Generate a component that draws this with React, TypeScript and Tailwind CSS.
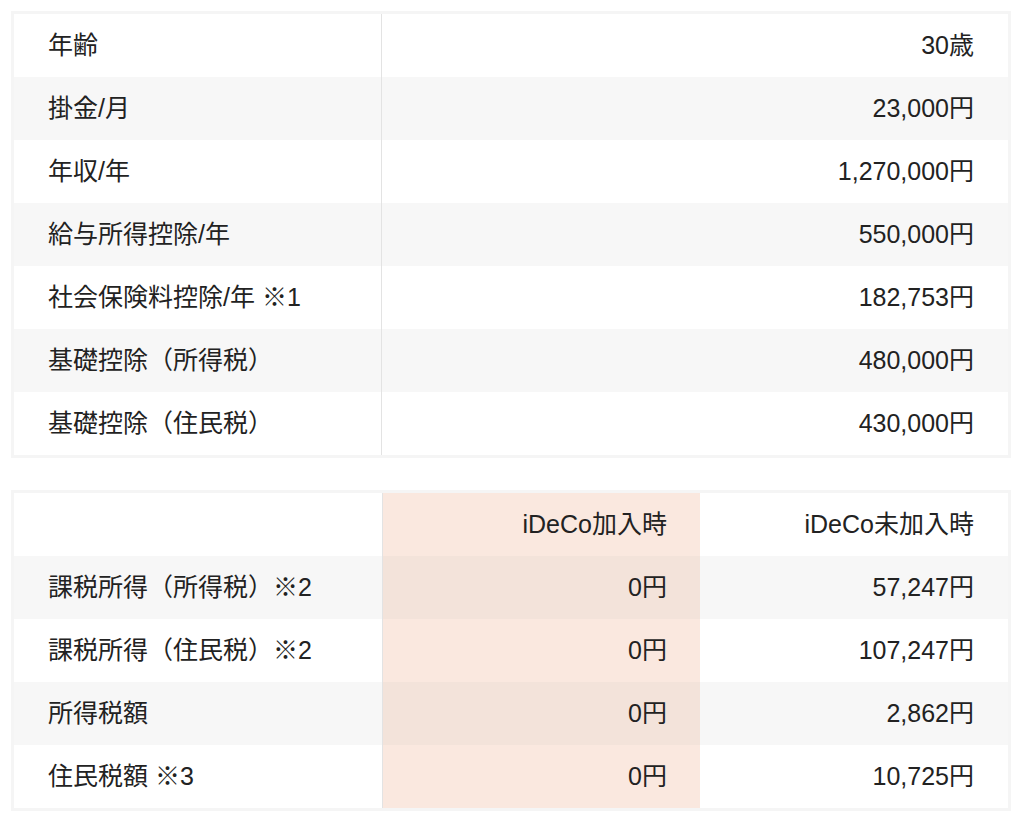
const profile: [string, string][] = [
  ['年齢', '30歳'],
  ['掛金/月', '23,000円'],
  ['年収/年', '1,270,000円'],
  ['給与所得控除/年', '550,000円'],
  ['社会保険料控除/年 ※1', '182,753円'],
  ['基礎控除（所得税）', '480,000円'],
  ['基礎控除（住民税）', '430,000円'],
];

const taxes: [string, string, string][] = [
  ['課税所得（所得税）※2', '0円', '57,247円'],
  ['課税所得（住民税）※2', '0円', '107,247円'],
  ['所得税額', '0円', '2,862円'],
  ['住民税額 ※3', '0円', '10,725円'],
];

export default function App() {
  return (
    <div
      className="bg-white p-[11px] text-[25px] text-[#222]"
      style={{fontFamily: '"Liberation Sans", "Noto Sans CJK JP", sans-serif'}}
    >
      <div className="w-[1000px] border-[3px] border-[#f5f5f5]">
        <table className="w-full border-separate border-spacing-0 table-fixed">
          <colgroup>
            <col className="w-[368px]"/>
            <col/>
          </colgroup>
          <tbody>
            {profile.map(([label, value], i) => (
              <tr key={label} className={i % 2 === 1 ? 'bg-[#f7f7f7]' : 'bg-white'}>
                <td className="h-[63px] p-0 pl-[34px] border-r border-[#e3e3e3] whitespace-nowrap">{label}</td>
                <td className="h-[63px] p-0 pr-[34px] text-right whitespace-nowrap">{value}</td>
              </tr>
            ))}
          </tbody>
        </table>
      </div>

      <div className="mt-[32px] w-[1000px] border-[3px] border-[#f5f5f5]">
        <table className="w-full border-separate border-spacing-0 table-fixed">
          <colgroup>
            <col className="w-[369px]"/>
            <col className="w-[317px]"/>
            <col/>
          </colgroup>
          <thead>
            <tr className="bg-white">
              <th className="h-[63px] p-0 border-r border-[#e3e3e3]"/>
              <th className="h-[63px] p-0 pr-[33px] text-right font-normal bg-[#fae8df] whitespace-nowrap">iDeCo加入時</th>
              <th className="h-[63px] p-0 pr-[34px] text-right font-normal whitespace-nowrap">iDeCo未加入時</th>
            </tr>
          </thead>
          <tbody>
            {taxes.map(([label, withIdeco, without], i) => (
              <tr key={label} className={i % 2 === 0 ? 'bg-[#f7f7f7]' : 'bg-white'}>
                <td className="h-[63px] p-0 pl-[34px] border-r border-[#e3e3e3] whitespace-nowrap">{label}</td>
                <td
                  className={`h-[63px] p-0 pr-[33px] text-right whitespace-nowrap ${
                    i % 2 === 0 ? 'bg-[#f3e3da]' : 'bg-[#fae8df]'
                  }`}
                >
                  {withIdeco}
                </td>
                <td className="h-[63px] p-0 pr-[34px] text-right whitespace-nowrap">{without}</td>
              </tr>
            ))}
          </tbody>
        </table>
      </div>
    </div>
  );
}
